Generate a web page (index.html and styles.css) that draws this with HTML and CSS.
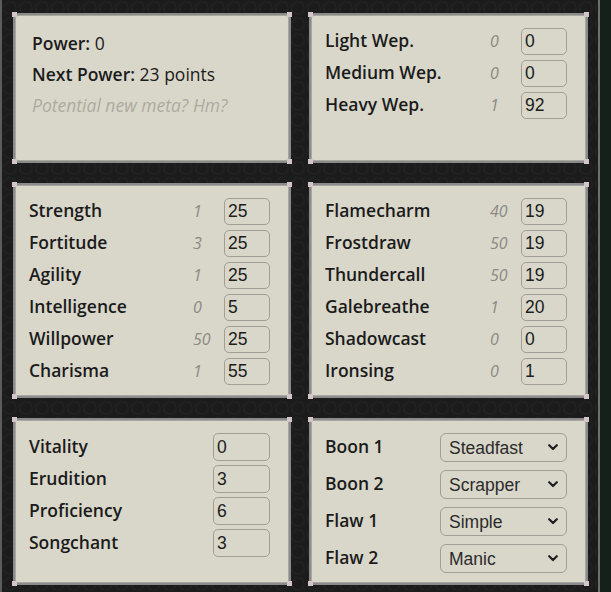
FILE: index.html
```html
<!DOCTYPE html>
<html lang="en">
<head>
<meta charset="utf-8">
<title>Character sheet</title>
<link rel="stylesheet" href="styles.css">
</head>
<body>
<div class="page">
  <div class="sheet">
    <section class="panel info">
      <p><b>Power:</b> 0</p>
      <p><b>Next Power:</b> 23 points</p>
      <p class="hint">Potential new meta? Hm?</p>
    </section>

    <section class="panel">
      <div class="rows">
        <div class="row"><span class="label">Light Wep.</span><span class="num">0</span><input class="val" value="0"></div>
        <div class="row"><span class="label">Medium Wep.</span><span class="num">0</span><input class="val" value="0"></div>
        <div class="row"><span class="label">Heavy Wep.</span><span class="num">1</span><input class="val" value="92"></div>
      </div>
    </section>

    <section class="panel">
      <div class="rows">
        <div class="row"><span class="label">Strength</span><span class="num">1</span><input class="val" value="25"></div>
        <div class="row"><span class="label">Fortitude</span><span class="num">3</span><input class="val" value="25"></div>
        <div class="row"><span class="label">Agility</span><span class="num">1</span><input class="val" value="25"></div>
        <div class="row"><span class="label">Intelligence</span><span class="num">0</span><input class="val" value="5"></div>
        <div class="row"><span class="label">Willpower</span><span class="num">50</span><input class="val" value="25"></div>
        <div class="row"><span class="label">Charisma</span><span class="num">1</span><input class="val" value="55"></div>
      </div>
    </section>

    <section class="panel">
      <div class="rows">
        <div class="row"><span class="label">Flamecharm</span><span class="num">40</span><input class="val" value="19"></div>
        <div class="row"><span class="label">Frostdraw</span><span class="num">50</span><input class="val" value="19"></div>
        <div class="row"><span class="label">Thundercall</span><span class="num">50</span><input class="val" value="19"></div>
        <div class="row"><span class="label">Galebreathe</span><span class="num">1</span><input class="val" value="20"></div>
        <div class="row"><span class="label">Shadowcast</span><span class="num">0</span><input class="val" value="0"></div>
        <div class="row"><span class="label">Ironsing</span><span class="num">0</span><input class="val" value="1"></div>
      </div>
    </section>

    <section class="panel">
      <div class="rows tight">
        <div class="row wide"><span class="label">Vitality</span><input class="val" value="0"></div>
        <div class="row wide"><span class="label">Erudition</span><input class="val" value="3"></div>
        <div class="row wide"><span class="label">Proficiency</span><input class="val" value="6"></div>
        <div class="row wide"><span class="label">Songchant</span><input class="val" value="3"></div>
      </div>
    </section>

    <section class="panel">
      <div class="rows picks">
        <div class="row pick"><span class="label">Boon 1</span>
          <span class="selwrap"><select><option>Steadfast</option></select><svg class="chev" viewBox="0 0 10 7" width="10" height="7"><polyline points="1.2,1.2 5,5 8.8,1.2"/></svg></span></div>
        <div class="row pick"><span class="label">Boon 2</span>
          <span class="selwrap"><select><option>Scrapper</option></select><svg class="chev" viewBox="0 0 10 7" width="10" height="7"><polyline points="1.2,1.2 5,5 8.8,1.2"/></svg></span></div>
        <div class="row pick"><span class="label">Flaw 1</span>
          <span class="selwrap"><select><option>Simple</option></select><svg class="chev" viewBox="0 0 10 7" width="10" height="7"><polyline points="1.2,1.2 5,5 8.8,1.2"/></svg></span></div>
        <div class="row pick"><span class="label">Flaw 2</span>
          <span class="selwrap"><select><option>Manic</option></select><svg class="chev" viewBox="0 0 10 7" width="10" height="7"><polyline points="1.2,1.2 5,5 8.8,1.2"/></svg></span></div>
      </div>
    </section>
  </div>
</div>
</body>
</html>
```

FILE: styles.css
```css
* { box-sizing: border-box; }

html, body {
  margin: 0;
  height: 100%;
}

body {
  background: #15201a;
  font-family: "Open Sans", "Noto Sans", sans-serif;
}

.page {
  width: 600px;
  min-height: 592px;
  background-color: #1c1c1c;
  background-image:
    radial-gradient(circle at 50% 50%, transparent 5px, #222 6px, transparent 7.5px),
    radial-gradient(circle at 0 0, transparent 5px, #202020 6px, transparent 7.5px);
  background-size: 16px 16px, 16px 16px;
  border-left: 2px solid #5c5c5c;
  border-right: 2px solid #6e6e6e;
  padding: 13px 10px 0 11px;
}

.sheet {
  display: grid;
  grid-template-columns: 278px 279px;
  grid-template-rows: 150px 215px 167px;
  column-gap: 18px;
  row-gap: 20px;
}

.panel {
  position: relative;
  background: #d9d7ca;
  border: 2px solid #8b8b8b;
  box-shadow: inset 0 0 0 1px #a9a8a0;
  padding: 13px 19px 0 14px;
  color: #1b1b1b;
}

.panel::before {
  content: "";
  position: absolute;
  inset: -3px;
  pointer-events: none;
  background:
    linear-gradient(#d3c6ca, #d3c6ca) left top / 5px 5px no-repeat,
    linear-gradient(#d3c6ca, #d3c6ca) right top / 5px 5px no-repeat,
    linear-gradient(#d3c6ca, #d3c6ca) left bottom / 5px 5px no-repeat,
    linear-gradient(#d3c6ca, #d3c6ca) right bottom / 5px 5px no-repeat;
}

.info {
  padding: 13px 17px 0 17px;
  font-size: 17.5px;
}

.info p {
  margin: 0;
  line-height: 31px;
}

.info b {
  font-weight: 600;
}

.hint {
  font-style: italic;
  color: #adaba1;
}

.rows {
  display: flex;
  flex-direction: column;
  gap: 5px;
}

.rows.tight {
  gap: 4px;
}

.row {
  display: grid;
  grid-template-columns: 1fr 31px 46px;
  align-items: baseline;
}

.row.wide {
  grid-template-columns: 1fr 57px;
}

.label {
  font-size: 17.5px;
  font-weight: 600;
  white-space: nowrap;
}

.num {
  font-size: 16px;
  font-style: italic;
  color: #8b8a84;
}

.val {
  width: 100%;
  height: 27px;
  margin: 0;
  border: 1px solid #a19f95;
  border-radius: 5px;
  background: transparent;
  font: 17.5px "Liberation Sans", Arial, sans-serif;
  color: #1c1c1c;
  padding: 0 0 0 3px;
}

.row.wide .val {
  height: 28px;
}

.picks {
  gap: 8px;
}

.row.pick {
  grid-template-columns: 1fr 127px;
  align-items: center;
}

.row.pick .label {
  margin-top: -3px;
}

.selwrap {
  position: relative;
  display: block;
  height: 29px;
}

.selwrap select {
  appearance: none;
  -webkit-appearance: none;
  width: 100%;
  height: 29px;
  margin: 0;
  border: 1px solid #a19f95;
  border-radius: 6px;
  background: transparent;
  font: 17.5px "Liberation Sans", Arial, sans-serif;
  color: #2b2b2b;
  padding: 0 0 0 8px;
}

.chev {
  position: absolute;
  right: 9px;
  top: 11px;
  pointer-events: none;
}

.chev polyline {
  fill: none;
  stroke: #1f1f1f;
  stroke-width: 2.2;
  stroke-linecap: round;
  stroke-linejoin: round;
}
```
